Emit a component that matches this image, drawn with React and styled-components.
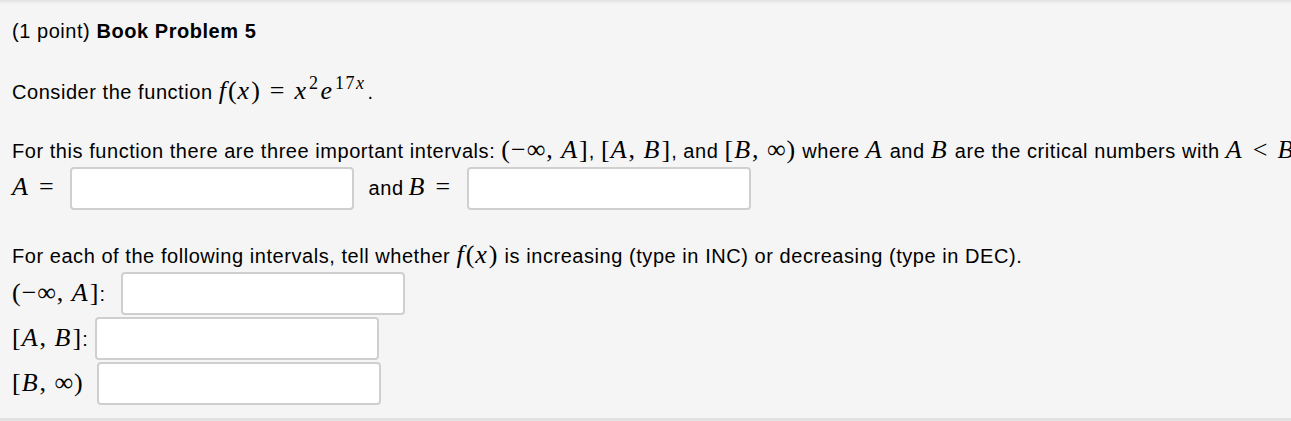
import React from 'react'
import styled, { createGlobalStyle } from 'styled-components'

const GlobalStyle = createGlobalStyle`
	html, body {
		margin: 0;
		padding: 0;
		background: #f5f5f5;
	}
`

const Page = styled.div`
	width: 1291px;
	height: 421px;
	box-sizing: border-box;
	overflow: hidden;
	background: linear-gradient(#e2e2e2 0, #f0f0f0 3px, #f5f5f5 5px);
	border-bottom: 3px solid #e2e2e2;
	padding: 19px 0 0 12px;
	font-family: 'Liberation Sans', Arial, sans-serif;
	font-size: 20px;
	letter-spacing: 0.55px;
	color: #000;
	white-space: nowrap;
`

const Line = styled.div`
	height: 24px;
	line-height: 24px;
	margin-top: ${p => p.gap || 0}px;
`

const Title = styled.b`
	font-weight: bold;
`

const Math = styled.span`
	font-family: 'Liberation Serif', 'Times New Roman', serif;
	font-size: 26px;
	letter-spacing: 1px;
	line-height: 0;
`

const I = styled.i`
	font-style: italic;
	padding-right: 1px;
`

const Op = styled.span`
	margin: 0 ${p => p.space ?? 9}px;
`

const Sup = styled.sup`
	font-size: 18px;
	letter-spacing: 1.5px;
	vertical-align: 10px;
	line-height: 0;
	margin-left: 1px;
	margin-right: 1px;
`

const Row = styled.div`
	display: flex;
	align-items: center;
	height: ${p => p.h || 45}px;
	margin-top: ${p => p.gap || 0}px;
`

const Label = styled.span`
	margin-right: ${p => p.right || 12}px;
	line-height: 24px;
`

const Field = styled.input`
	width: 284px;
	height: 43px;
	box-sizing: border-box;
	border: 2px solid #cfcfcf;
	border-radius: 4px;
	background: #fff;
	outline: none;
	padding: 0 8px;
	font-size: 18px;
`

const Word = styled.span`
	margin: 0 5px 0 15px;
`

export default function App() {
	return (
		<>
			<GlobalStyle />
			<Page>
				<Line>
					(1 point) <Title>Book Problem 5</Title>
				</Line>
				<Line gap={37}>
					Consider the function{' '}
					<Math>
						<I>f</I>(<I>x</I>)<Op>=</Op><I>x</I><Sup>2</Sup><I>e</I><Sup>17<I>x</I></Sup>
					</Math>
					.
				</Line>
				<Line gap={35}>
					For this function there are three important intervals:{' '}
					<Math>(−∞, <I>A</I>]</Math>, <Math>[<I>A</I>, <I>B</I>]</Math>, and{' '}
					<Math>[<I>B</I>, ∞)</Math> where <Math><I>A</I></Math> and{' '}
					<Math><I>B</I></Math> are the critical numbers with{' '}
					<Math><I>A</I><Op>&lt;</Op><I>B</I></Math>
				</Line>
				<Row gap={3} h={44}>
					<Label right={6}>
						<Math><I>A</I><Op>=</Op></Math>
					</Label>
					<Field />
					<Word>and</Word>
					<Label right={7}>
						<Math><I>B</I><Op>=</Op></Math>
					</Label>
					<Field />
				</Row>
				<Line gap={34}>
					For each of the following intervals, tell whether{' '}
					<Math><I>f</I>(<I>x</I>)</Math> is increasing (type in INC) or
					decreasing (type in DEC).
				</Line>
				<Row gap={3}>
					<Label right={15}><Math>(−∞, <I>A</I>]</Math>:</Label>
					<Field />
				</Row>
				<Row>
					<Label right={7}><Math>[<I>A</I>, <I>B</I>]</Math>:</Label>
					<Field />
				</Row>
				<Row>
					<Label right={13}><Math>[<I>B</I>, ∞)</Math></Label>
					<Field />
				</Row>
			</Page>
		</>
	)
}
